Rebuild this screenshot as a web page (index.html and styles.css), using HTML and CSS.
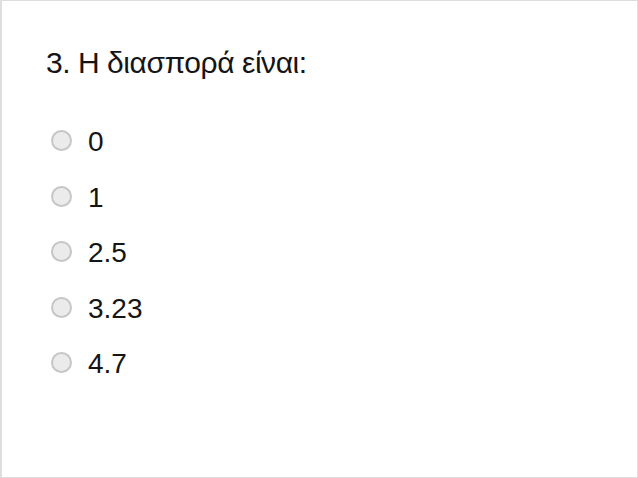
FILE: index.html
```html
<!DOCTYPE html>
<html lang="el">
<head>
<meta charset="utf-8">
<link rel="stylesheet" href="styles.css">
</head>
<body>
<div class="frame">
  <div class="question">3. Η διασπορά είναι:</div>
  <div class="options">
    <label class="option"><span class="radio"></span><span class="label">0</span></label>
    <label class="option"><span class="radio"></span><span class="label">1</span></label>
    <label class="option"><span class="radio"></span><span class="label">2.5</span></label>
    <label class="option"><span class="radio"></span><span class="label">3.23</span></label>
    <label class="option"><span class="radio"></span><span class="label">4.7</span></label>
  </div>
</div>
</body>
</html>
```
FILE: styles.css
```css
html, body {
  margin: 0;
  padding: 0;
  background: #ffffff;
}
.frame {
  box-sizing: border-box;
  width: 638px;
  height: 478px;
  border: 1px solid #dedede;
  border-left-width: 2px;
  background: #ffffff;
  padding: 44px 0 0 44px;
  font-family: "Liberation Sans", Arial, sans-serif;
  color: #151515;
}
.question {
  font-size: 30px;
  line-height: 36px;
  letter-spacing: -0.45px;
}
.options {
  display: flex;
  flex-direction: column;
  gap: 27.5px;
  margin-top: 47px;
}
.option {
  display: flex;
  align-items: center;
  height: 28px;
}
.radio {
  box-sizing: border-box;
  width: 21px;
  height: 21px;
  border-radius: 50%;
  border: 2px solid #c6c6c6;
  background: #ebebeb;
  margin-left: 5px;
  margin-right: 16px;
  margin-top: -3px;
}
.label {
  font-size: 28px;
  line-height: 28px;
}
```
